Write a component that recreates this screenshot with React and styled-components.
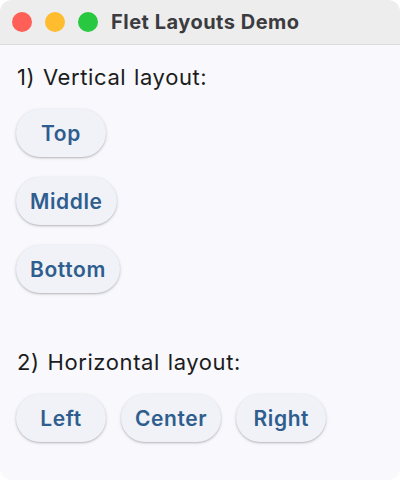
import React from "react";
import styled, { createGlobalStyle } from "styled-components";

const Global = createGlobalStyle`
  html, body { margin: 0; padding: 0; background: #ffffff; }
  body { width: 400px; height: 480px; overflow: hidden; }
`;

const Window = styled.div`
  width: 400px;
  height: 480px;
  box-sizing: border-box;
  border-radius: 12px;
  overflow: hidden;
  background: #f8f8fd;
  display: flex;
  flex-direction: column;
`;

const TitleBar = styled.div`
  height: 44px;
  flex: none;
  background: #ededed;
  border-bottom: 1px solid #d9d9dc;
  display: flex;
  align-items: center;
  padding-left: 12px;
  gap: 13px;
`;

const Light = styled.span`
  width: 20px;
  height: 20px;
  border-radius: 50%;
  background: ${(p) => p.$color};
  flex: none;
`;

const Title = styled.div`
  margin-left: 0;
  font-family: Inter, "Liberation Sans", sans-serif;
  font-weight: 700;
  font-size: 20px;
  letter-spacing: 0.5px;
  color: #3b3b40;
`;

const Content = styled.div`
  padding: 20px 16px 0 17px;
  display: flex;
  flex-direction: column;
`;

const Heading = styled.div`
  font-family: Inter, "Noto Sans", sans-serif;
  font-size: 22px;
  line-height: 24px;
  letter-spacing: 0.6px;
  word-spacing: 1px;
  color: #1b1c20;
  margin-top: ${(p) => p.$top || 0}px;
`;

const Column = styled.div`
  display: flex;
  flex-direction: column;
  align-items: flex-start;
  gap: 20px;
  margin-top: 20px;
  margin-left: -1px;
`;

const Row = styled.div`
  display: flex;
  gap: 15px;
  margin-top: 20px;
  margin-left: -1px;
`;

const Button = styled.button`
  height: 48px;
  min-width: 90px;
  padding: 0 14px;
  border: none;
  border-radius: 24px;
  background: #f0f2f8;
  box-shadow: 0 1px 2px rgba(0, 0, 0, 0.22), 0 1px 4px rgba(0, 0, 0, 0.08);
  font-family: Inter, "Noto Sans", sans-serif;
  font-weight: 600;
  font-size: 21px;
  letter-spacing: 0.6px;
  color: #2f5e8e;
  cursor: pointer;
`;

export default function App() {
  return (
    <>
      <Global />
      <Window>
        <TitleBar>
          <Light $color="#fe5f57" />
          <Light $color="#febc2e" />
          <Light $color="#28c840" />
          <Title>Flet Layouts Demo</Title>
        </TitleBar>
        <Content>
          <Heading>1) Vertical layout:</Heading>
          <Column>
            <Button>Top</Button>
            <Button>Middle</Button>
            <Button>Bottom</Button>
          </Column>
          <Heading $top={57}>2) Horizontal layout:</Heading>
          <Row>
            <Button>Left</Button>
            <Button>Center</Button>
            <Button>Right</Button>
          </Row>
        </Content>
      </Window>
    </>
  );
}
